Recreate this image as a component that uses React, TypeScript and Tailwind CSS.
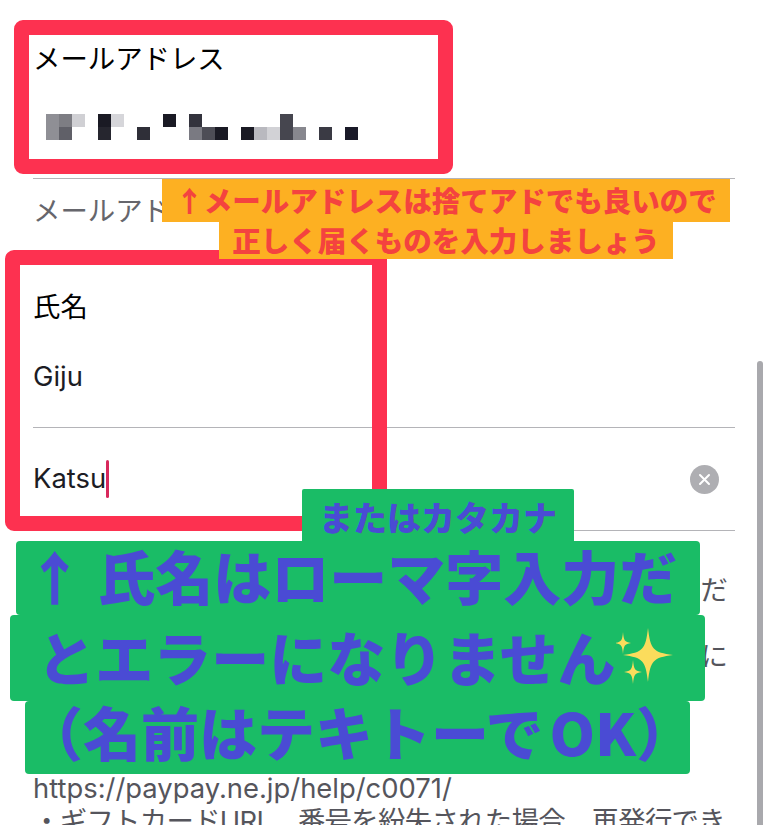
import React from 'react';

const FONT = 'font-["Inter","Noto_Sans_CJK_JP",sans-serif]';
const CJK = 'font-["Noto_Sans_CJK_JP",sans-serif]';

// pixelated email: [column, row, colour], cells are 13px
const mosaic: [number, number, string][] = [
    [0, 0, '#8f8f95'], [1, 0, '#7d7d83'], [2, 0, '#d0d0d4'], [4, 0, '#1a1a24'], [5, 0, '#d6d6da'],
    [9, 0, '#1a1a24'], [11, 0, '#33333d'], [18, 0, '#46464f'],
    [0, 1, '#8f8f95'], [1, 1, '#606068'], [4, 1, '#26262f'], [7, 1, '#2f2f38'],
    [11, 1, '#7a7a82'], [12, 1, '#4d4d56'], [13, 1, '#1a1a24'], [15, 1, '#1a1a24'],
    [16, 1, '#b9b9bf'], [17, 1, '#d2d2d6'], [18, 1, '#46464f'], [19, 1, '#87878e'],
    [21, 1, '#3a3a44'], [23, 1, '#1a1a28'],
];

function Mosaic() {
    return (
        <svg width="312" height="26" viewBox="0 0 312 26" className="block ml-[13px]">
            {mosaic.map(([c, r, fill]) => (
                <rect key={`${c}-${r}`} x={c * 13} y={r * 13} width="13" height="13" fill={fill} />
            ))}
        </svg>
    );
}

function Sparkles() {
    const star = 'M0 -10C1 -2 2 -1 10 0C2 1 1 2 0 10C-1 2 -2 1 -10 0C-2 -1 -1 -2 0 -10Z';
    return (
        <svg width="58" height="80" viewBox="0 0 58 80" className="shrink-0">
            <path d={star} transform="translate(32 39) scale(2.5 2.7)" fill="#fbdc5c" />
            <path d={star} transform="translate(7 27) scale(0.8 1.1)" fill="#fbdc5c" />
            <path d={star} transform="translate(17 56) scale(0.9 1.2)" fill="#fbdc5c" />
        </svg>
    );
}

function Divider() {
    return <div className="h-px bg-[#b4b4b8]" />;
}

export default function App() {
    return (
        <div className={`relative w-[768px] h-[825px] overflow-hidden bg-white ${FONT}`}>
            {/* form underneath */}
            <div className="pl-[33px] w-[735px] text-[27.4px] text-[#1c1c24]">
                <div className="h-[114px] pt-[39px] leading-[40px] text-black">メールアドレス</div>
                <Mosaic />
                <div className="h-[38px]" />
                <Divider />
                <div className="h-[66px] flex items-center text-[#66666c]">メールアドレス</div>
                <div className="h-[43px]" />
                <div className="h-[40px] flex items-center text-black">氏名</div>
                <div className="h-[29px]" />
                <div className="h-[40px] flex items-center">Giju</div>
                <div className="h-[30px]" />
                <Divider />
                <div className="h-[102px] flex items-center justify-between">
                    <div className="flex items-center">
                        <span>Katsu</span>
                        <span className="w-[3px] h-[38px] bg-[#d8285c] rounded-full" />
                    </div>
                    <div className="w-[29px] h-[29px] mr-[16px] rounded-full bg-[#aeaeb2] flex items-center justify-center">
                        <svg width="13" height="13" viewBox="0 0 13 13" stroke="#ffffff" strokeWidth="2" strokeLinecap="round">
                            <path d="M2 2L11 11M11 2L2 11" />
                        </svg>
                    </div>
                </div>
                <Divider />
                <div className="text-[#55555c] leading-[33px] pt-[43px]">
                    <div className="h-[33px] text-right pr-[7px]">だ</div>
                    <div className="h-[33px]" />
                    <div className="h-[33px] text-right pr-[7px]">に</div>
                    <div className="h-[99px]" />
                    <div className="whitespace-nowrap">https://paypay.ne.jp/help/c0071/</div>
                    <div className="whitespace-nowrap tracking-[-0.7px]">・ギフトカードURL、番号を紛失された場合、再発行でき</div>
                </div>
            </div>

            {/* scrollbar */}
            <div className="absolute left-[757px] top-[361px] w-[6px] h-[470px] rounded-full bg-[#a9a9ad]" />

            {/* red highlight boxes */}
            <div className="absolute left-[14px] top-[20px] w-[439px] h-[154px] rounded-[9px] border-[15px] border-[#fd3150]" />
            <div className="absolute left-[5px] top-[250px] w-[382px] h-[281px] rounded-[9px] border-[15px] border-[#fd3150]" />

            {/* orange note */}
            <div className={`absolute left-[162px] top-[179px] w-[568px] flex flex-col items-center font-black text-[#f4433f] text-[28.5px] ${CJK}`}>
                <div className="w-[568px] h-[43px] bg-[#fdb022] flex items-center justify-center whitespace-nowrap">↑メールアドレスは捨てアドでも良いので</div>
                <div className="w-[454px] h-[37px] bg-[#fdb022] flex items-center justify-center whitespace-nowrap">正しく届くものを入力しましょう</div>
            </div>

            {/* green note */}
            <div className={`absolute left-[302px] top-[489px] w-[272px] h-[54px] rounded-[2px] bg-[#1abc66] flex items-center justify-center font-black text-[#4a4bd4] text-[34px] whitespace-nowrap ${CJK}`}>またはカタカナ</div>
            <div className={`absolute left-[10px] top-[541px] w-[695px] flex flex-col items-center font-black text-[#4a4bd4] text-[58px] whitespace-nowrap ${CJK}`}>
                <div className="w-[684px] h-[74px] pb-[6px] pr-[12px] rounded-[4px] bg-[#1abc66] flex items-center justify-center">↑ 氏名はローマ字入力だ</div>
                <div className="w-[695px] h-[86px] pb-[4px] pr-[4px] rounded-[4px] bg-[#1abc66] flex items-center justify-center">
                    <span>とエラーになりません</span>
                    <Sparkles />
                </div>
                <div className="w-[665px] h-[73px] pb-[12px] pl-[4px] rounded-[4px] bg-[#1abc66] flex items-center justify-center">
                    <span>（名前はテキトーで</span>
                    <span className="ml-[6px]">OK）</span>
                </div>
            </div>
        </div>
    );
}
